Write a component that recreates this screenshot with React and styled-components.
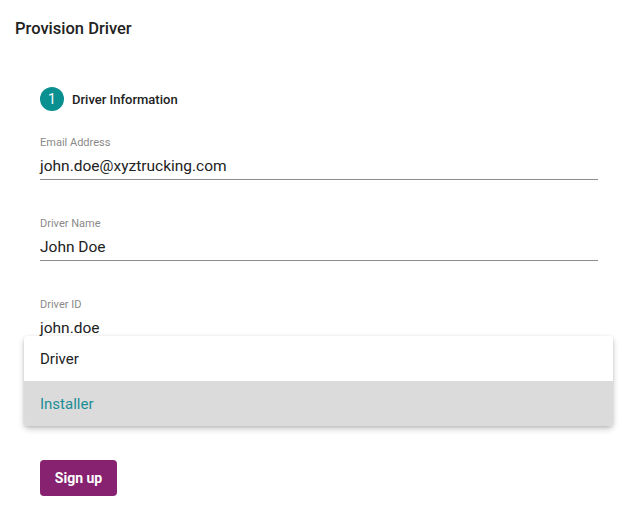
import React, { useState } from 'react';
import styled, { createGlobalStyle } from 'styled-components';

const GlobalStyle = createGlobalStyle`
  body {
    margin: 0;
    background: #fff;
    font-family: Roboto, "Liberation Sans", sans-serif;
    color: #222;
  }
`;

const Page = styled.div`
  padding: 19px 15px 0;
`;

const Title = styled.h1`
  margin: 0;
  font-size: 16.5px;
  line-height: 20px;
  font-weight: 500;
  color: #222;
`;

const Form = styled.div`
  margin: 48px 0 0 25px;
  width: 558px;
`;

const StepHeader = styled.div`
  display: flex;
  align-items: center;
  gap: 8px;
  height: 24px;
`;

const StepBadge = styled.span`
  display: flex;
  align-items: center;
  justify-content: center;
  width: 24px;
  height: 24px;
  border-radius: 50%;
  background: #0b9091;
  color: #fff;
  font-size: 14px;
`;

const StepLabel = styled.span`
  font-size: 13px;
  font-weight: 500;
  color: #222;
`;

const Field = styled.div`
  position: relative;
  margin-top: ${p => p.$top}px;
`;

const Label = styled.div`
  font-size: 11px;
  line-height: 14px;
  color: #8a8a8a;
  visibility: ${p => (p.$hidden ? 'hidden' : 'visible')};
`;

const Value = styled.div`
  margin-top: 6px;
  padding-bottom: 3px;
  font-size: 15.5px;
  line-height: 20px;
  color: #222;
  border-bottom: 1px solid #8c8c8c;
`;

const ValueText = styled.span`
  visibility: ${p => (p.$hidden ? 'hidden' : 'visible')};
`;

const Menu = styled.ul`
  position: absolute;
  top: -43px;
  left: -16px;
  width: 589px;
  margin: 0;
  padding: 0;
  list-style: none;
  background: #fff;
  border-radius: 4px;
  overflow: hidden;
  box-shadow: 0 3px 6px rgba(0, 0, 0, 0.2), 0 1px 3px rgba(0, 0, 0, 0.12);
  z-index: 10;
`;

const MenuItem = styled.li`
  height: 45px;
  display: flex;
  align-items: center;
  padding: 0 16px;
  font-size: 15px;
  cursor: pointer;
  background: ${p => (p.$selected ? '#dbdbdb' : '#fff')};
  color: ${p => (p.$selected ? '#1b8e96' : '#222')};
`;

const SubmitButton = styled.button`
  margin-top: 37px;
  width: 77px;
  height: 36px;
  border: none;
  border-radius: 4px;
  background: #86226f;
  color: #fff;
  font-family: inherit;
  font-size: 14px;
  font-weight: 700;
  cursor: pointer;
`;

const fields = [
  { label: 'Email Address', value: 'john.doe@xyztrucking.com' },
  { label: 'Driver Name', value: 'John Doe' },
  { label: 'Driver ID', value: 'john.doe' },
];

const roles = ['Driver', 'Installer'];

export default function App() {
  const [role, setRole] = useState('Installer');
  const [open, setOpen] = useState(true);

  return (
    <Page>
      <GlobalStyle />
      <Title>Provision Driver</Title>
      <Form>
        <StepHeader>
          <StepBadge>1</StepBadge>
          <StepLabel>Driver Information</StepLabel>
        </StepHeader>
        {fields.map((f, i) => (
          <Field key={f.label} $top={i === 0 ? 25 : 37}>
            <Label>{f.label}</Label>
            <Value>{f.value}</Value>
          </Field>
        ))}
        <Field $top={37}>
          <Label $hidden={open}>Role</Label>
          <Value onClick={() => setOpen(true)}>
            <ValueText $hidden={open}>{role}</ValueText>
          </Value>
          {open && (
            <Menu>
              {roles.map(r => (
                <MenuItem
                  key={r}
                  $selected={r === role}
                  onClick={() => {
                    setRole(r);
                    setOpen(false);
                  }}
                >
                  {r}
                </MenuItem>
              ))}
            </Menu>
          )}
        </Field>
        <SubmitButton>Sign up</SubmitButton>
      </Form>
    </Page>
  );
}
